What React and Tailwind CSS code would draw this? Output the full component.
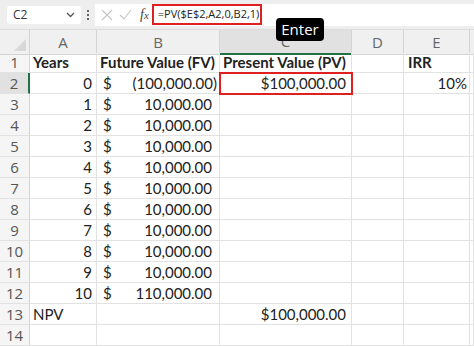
import React from 'react';

const cols = 'grid grid-cols-[30px_67px_123px_132px_52px_66px_1fr]';

const rows = [
  { n: 1, a: 'Years', aBold: true, b: 'Future Value (FV)', bBold: true, c: 'Present Value (PV)', cBold: true, e: 'IRR', eBold: true },
  { n: 2, a: '0', dollar: true, b: '(100,000.00)', neg: true, c: '$100,000.00', e: '10%', active: true },
  { n: 3, a: '1', dollar: true, b: '10,000.00' },
  { n: 4, a: '2', dollar: true, b: '10,000.00' },
  { n: 5, a: '3', dollar: true, b: '10,000.00' },
  { n: 6, a: '4', dollar: true, b: '10,000.00' },
  { n: 7, a: '5', dollar: true, b: '10,000.00' },
  { n: 8, a: '6', dollar: true, b: '10,000.00' },
  { n: 9, a: '7', dollar: true, b: '10,000.00' },
  { n: 10, a: '8', dollar: true, b: '10,000.00' },
  { n: 11, a: '9', dollar: true, b: '10,000.00' },
  { n: 12, a: '10', dollar: true, b: '110,000.00' },
  { n: 13, a: 'NPV', aLeft: true, c: '$100,000.00' },
  { n: 14 },
];

function Row({ r }) {
  const cell = 'h-[21px] border-r border-b border-[#e2e2e2] flex items-center overflow-visible whitespace-nowrap';
  const isHead = r.n === 1;
  return (
    <div className={cols}>
      <div
        className={`h-[21px] border-b border-[#e2e2e2] flex items-center justify-center text-[15px] text-[#555] ${
          r.active ? 'bg-[#e1e1e1] border-r-2 border-r-[#217346]' : 'bg-[#f5f5f5] border-r border-r-[#d4d4d4]'
        }`}
        style={{ fontFamily: '"Open Sans", sans-serif' }}
      >
        {r.n}
      </div>
      <div className={`${cell} ${isHead || r.aLeft ? 'justify-start pl-[3px]' : 'justify-end pr-[4px]'} ${r.aBold ? 'font-bold' : ''}`}>
        {r.a}
      </div>
      <div className={`${cell} ${r.bBold ? 'font-bold pl-[3px]' : 'justify-between pl-[6px] pr-[7px]'}`}>
        {r.dollar && <span>$</span>}
        <span className={r.neg ? '-mr-[5px]' : ''}>{r.b}</span>
      </div>
      <div className={`${cell} ${r.cBold ? 'font-bold pl-[3px]' : 'justify-end pr-[5px]'}`}>{r.c}</div>
      <div className={cell}></div>
      <div className={`${cell} ${r.eBold ? 'font-bold pl-[4px]' : 'justify-end pr-[2px]'}`}>{r.e}</div>
      <div className={cell}></div>
    </div>
  );
}

export default function App() {
  return (
    <div
      className="relative w-[474px] h-[346px] overflow-hidden bg-white text-[15px] text-[#222]"
      style={{ fontFamily: 'Lato, "Liberation Sans", sans-serif' }}
    >
      {/* formula bar */}
      <div className="h-[30px] bg-[#eeeeee] flex items-center border-b border-[#dcdcdc]">
        <div className="ml-[7px] w-[74px] h-[18px] bg-white rounded-[3px] flex items-center justify-between px-[6px] text-[12px] text-[#333]" style={{ fontFamily: '"Open Sans", sans-serif' }}>
          <span>C2</span>
          <svg width="9" height="6" viewBox="0 0 9 6"><path d="M1 1l3.5 3.5L8 1" stroke="#555" strokeWidth="1.3" fill="none" /></svg>
        </div>
        <div className="ml-[6px] flex flex-col gap-[2px]">
          <span className="w-[2px] h-[2px] bg-[#666]" />
          <span className="w-[2px] h-[2px] bg-[#666]" />
          <span className="w-[2px] h-[2px] bg-[#666]" />
        </div>
        <div className="flex-1 h-[22px] ml-[6px] bg-white flex items-center">
          <svg className="ml-[6px]" width="12" height="12" viewBox="0 0 12 12"><path d="M1 1l10 10M11 1L1 11" stroke="#c4c4c4" strokeWidth="1.1" /></svg>
          <svg className="ml-[6px]" width="13" height="11" viewBox="0 0 13 11"><path d="M1 6l4 4L12 1" stroke="#c4c4c4" strokeWidth="1.1" fill="none" /></svg>
          <span className="ml-[8px] text-[14px] italic text-[#444]" style={{ fontFamily: '"Liberation Serif", serif' }}>f<span className="text-[11px]">x</span></span>
          <div className="ml-[3px] h-[21px] w-[110px] border-2 border-[#e02020] flex items-center pl-[4px] text-[11px] text-[#222]" style={{ fontFamily: '"Open Sans", sans-serif' }}>
            =PV($E$2,A2,0,B2,1)
          </div>
        </div>
      </div>

      {/* column headers */}
      <div className={`${cols} h-[22px] text-[15px] text-[#666]`} style={{ fontFamily: '"Open Sans", sans-serif' }}>
        <div className="bg-[#f0f0f0] border-r border-b border-[#d4d4d4] relative">
          <svg className="absolute right-[3px] bottom-[3px]" width="12" height="12" viewBox="0 0 12 12"><path d="M12 0V12H0z" fill="#d8d8d8" /></svg>
        </div>
        <div className="bg-[#f0f0f0] border-r border-b border-[#d4d4d4] flex items-center justify-center">A</div>
        <div className="bg-[#f0f0f0] border-r border-b border-[#d4d4d4] flex items-center justify-center">B</div>
        <div className="bg-[#e1e1e1] border-r border-[#d4d4d4] border-b-2 border-b-[#217346] flex items-center justify-center">C</div>
        <div className="bg-[#f0f0f0] border-r border-b border-[#d4d4d4] flex items-center justify-center">D</div>
        <div className="bg-[#f0f0f0] border-r border-b border-[#d4d4d4] flex items-center justify-center">E</div>
        <div className="bg-[#f0f0f0] border-b border-[#d4d4d4]"></div>
      </div>

      {rows.map((r) => (
        <Row key={r.n} r={r} />
      ))}

      {/* selection box on C2 */}
      <div className="absolute left-[219px] top-[72px] w-[134px] h-[23px] border-2 border-[#e02020] pointer-events-none" />

      {/* Enter tooltip */}
      <div className="absolute left-[276px] top-[18px] w-[48px] h-[23px] bg-black rounded-[4px] text-white text-[15px] flex items-center justify-center" style={{ fontFamily: '"Open Sans", sans-serif' }}>
        Enter
      </div>
    </div>
  );
}
